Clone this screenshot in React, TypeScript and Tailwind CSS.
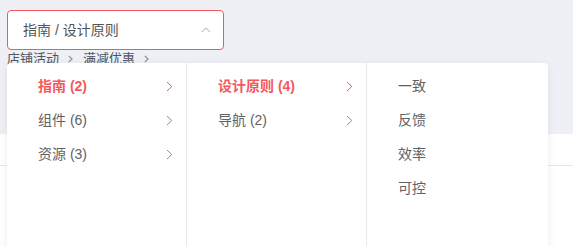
import type { ReactNode } from 'react'

type Item = { label: string; count?: number; active?: boolean; more?: boolean }

const cols: Item[][] = [
  [
    { label: '指南', count: 2, active: true, more: true },
    { label: '组件', count: 6, more: true },
    { label: '资源', count: 3, more: true },
  ],
  [
    { label: '设计原则', count: 4, active: true, more: true },
    { label: '导航', count: 2, more: true },
  ],
  [{ label: '一致' }, { label: '反馈' }, { label: '效率' }, { label: '可控' }],
]

function Chevron({ className }: { className: string }) {
  return (
    <svg width="7" height="11" viewBox="0 0 7 11" fill="none" className={className}>
      <path d="M1 1 L5.8 5.5 L1 10" stroke="currentColor" strokeWidth="1" />
    </svg>
  )
}

function Crumb({ children }: { children: ReactNode }) {
  return (
    <span className="flex items-center gap-[9px]">
      {children}
      <svg width="5" height="8" viewBox="0 0 5 8" fill="none" className="text-[#8a8f99]">
        <path d="M0.8 0.8 L4 4 L0.8 7.2" stroke="currentColor" strokeWidth="1.2" />
      </svg>
    </span>
  )
}

export default function App() {
  return (
    <div
      className="relative h-[246px] w-[573px] overflow-hidden bg-[#eef0f5]"
      style={{ fontFamily: '"Liberation Sans", "Noto Sans CJK SC", sans-serif' }}
    >
      <div className="px-[7px] pt-[10px]">
        <div className="flex h-[40px] w-[217px] items-center justify-between rounded border border-[#f4585d] bg-white pl-[15px] pr-[12px] text-[14px] text-[#555]">
          <span>指南 / 设计原则</span>
          <svg width="10" height="6" viewBox="0 0 10 6" fill="none" className="text-[#c0c4cc]">
            <path d="M0.8 5.2 L5 1 L9.2 5.2" stroke="currentColor" strokeWidth="1.1" />
          </svg>
        </div>
        <div className="flex gap-[10px] text-[13px] leading-[18px] text-[#505560]">
          <Crumb>店铺活动</Crumb>
          <Crumb>满减优惠</Crumb>
        </div>
      </div>

      {/* page card underneath */}
      <div className="mt-[66px] h-[120px] bg-white">
        <div className="h-[32px] border-b border-[#e4e6eb]" />
      </div>

      {/* cascader dropdown */}
      <div className="absolute left-[7px] top-[63px] flex h-[200px] rounded bg-white shadow-[0_2px_8px_rgba(0,0,0,0.08)]">
        {cols.map((col, i) => (
          <div
            key={i}
            className={`py-[6px] ${i < 2 ? 'w-[180px] border-r border-[#e6e8ee]' : 'w-[181px]'}`}
          >
            {col.map((it) => (
              <div
                key={it.label}
                className={`flex h-[34px] items-center justify-between pl-[31px] pr-[13px] text-[14px] ${
                  it.active ? 'font-bold text-[#f4585d]' : 'text-[#606266]'
                }`}
              >
                <span>
                  {it.label}
                  {it.count !== undefined && ` (${it.count})`}
                </span>
                {it.more && <Chevron className={it.active ? 'text-[#f4585d]' : 'text-[#8a8f99]'} />}
              </div>
            ))}
          </div>
        ))}
      </div>
    </div>
  )
}
